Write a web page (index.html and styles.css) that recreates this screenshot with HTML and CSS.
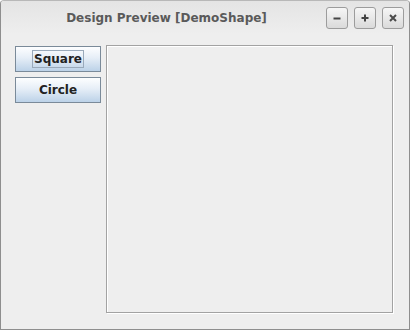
FILE: index.html
```html
<!DOCTYPE html>
<html lang="en">
<head>
    <meta charset="UTF-8">
    <title>Design Preview [DemoShape]</title>
    <link rel="stylesheet" href="styles.css">
</head>
<body>
    <div class="window">
        <div class="titlebar">
            <span class="title">Design Preview [DemoShape]</span>
            <div class="controls">
                <button class="ctl" title="Minimize">
                    <svg width="10" height="10" viewBox="0 0 10 10"><path d="M1.5 5.5h7" stroke="#444444" stroke-width="2"/></svg>
                </button>
                <button class="ctl" title="Maximize">
                    <svg width="10" height="10" viewBox="0 0 10 10"><path d="M1.5 5h7M5 1.5v7" stroke="#444444" stroke-width="2"/></svg>
                </button>
                <button class="ctl" title="Close">
                    <svg width="10" height="10" viewBox="0 0 10 10"><path d="M2 2l6 6M8 2l-6 6" stroke="#4a4a4a" stroke-width="2"/></svg>
                </button>
            </div>
        </div>
        <div class="content">
            <div class="sidebar">
                <button class="shape-btn"><span class="focus">Square</span></button>
                <button class="shape-btn"><span>Circle</span></button>
            </div>
            <div class="canvas"></div>
        </div>
    </div>
</body>
</html>
```

FILE: styles.css
```css
* {
    box-sizing: border-box;
    margin: 0;
    padding: 0;
}

body {
    font-family: 'DejaVu Sans', sans-serif;
    background: #ffffff;
}

.window {
    width: 410px;
    height: 330px;
    border: 1px solid #8e8e8e;
    border-top-color: #b8b8b8;
    border-radius: 4px 4px 0 0;
    background-color: #eeeeee;
    display: flex;
    flex-direction: column;
}

.titlebar {
    height: 33px;
    display: flex;
    align-items: center;
    background: linear-gradient(to bottom, #e4e4e4 0%, #eeeeee 100%);
    border-radius: 3px 3px 0 0;
    padding-right: 5px;
}

.title {
    flex: 1;
    text-align: center;
    font-size: 12px;
    font-weight: bold;
    color: #5a5a5a;
    padding-left: 6px;
    padding-top: 1px;
}

.controls {
    display: flex;
    gap: 6px;
}

.ctl {
    width: 22px;
    height: 22px;
    border: 1px solid #9c9c9c;
    border-radius: 3px;
    background: linear-gradient(to bottom, #f6f6f6 0%, #dadada 100%);
    display: flex;
    align-items: center;
    justify-content: center;
}

.content {
    flex: 1;
    display: flex;
    gap: 5px;
    padding: 11px 0 0 14px;
}

.sidebar {
    width: 86px;
    display: flex;
    flex-direction: column;
    gap: 5px;
    padding-top: 1px;
}

.shape-btn {
    height: 26px;
    border: 1px solid #7a8a99;
    background: linear-gradient(to bottom, #fdfeff 0%, #e6eef7 45%, #bcd2e8 100%);
    font-family: 'DejaVu Sans', sans-serif;
    font-size: 12px;
    font-weight: bold;
    color: #222222;
    display: flex;
    align-items: center;
    justify-content: center;
}

.shape-btn span {
    padding: 1px 1px;
    border: 1px solid transparent;
    line-height: 14px;
}

.shape-btn .focus {
    border-color: #9aaabb;
}

.canvas {
    width: 287px;
    height: 268px;
    border: 1px solid #a2a2a2;
    box-shadow: inset 1px 1px 0 #ffffff, 1px 1px 0 #ffffff;
}
```
